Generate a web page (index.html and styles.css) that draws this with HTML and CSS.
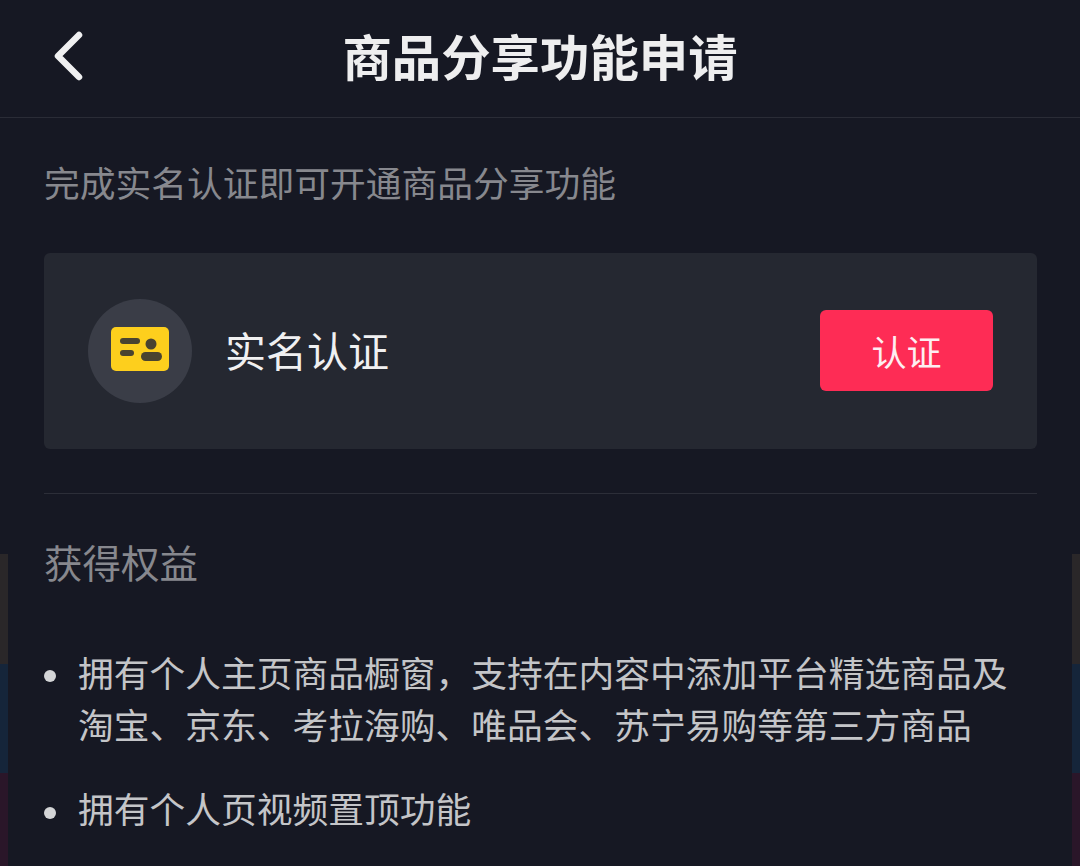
FILE: index.html
```html
<!DOCTYPE html>
<html lang="zh-CN">
<head>
<meta charset="utf-8">
<title>商品分享功能申请</title>
<link rel="stylesheet" href="styles.css">
</head>
<body>
<div class="strips strips-left"><i class="s1"></i><i class="s2"></i><i class="s3"></i></div>
<div class="strips strips-right"><i class="s1"></i><i class="s2"></i><i class="s3"></i></div>
<header class="topbar">
  <svg class="back" width="32" height="50" viewBox="0 0 32 50"><path d="M26 4 L5 25 L26 46" fill="none" stroke="#f0f0f1" stroke-width="6.500" stroke-linecap="round" stroke-linejoin="round"/></svg>
  <h1 class="title">商品分享功能申请</h1>
</header>
<main class="content">
  <p class="intro">完成实名认证即可开通商品分享功能</p>
  <section class="card">
    <div class="badge">
      <svg class="badge-icon" width="58" height="44" viewBox="0 0 58 44">
        <rect width="58" height="44" rx="5" fill="#fdcf1d"/>
        <rect x="9" y="11" width="20" height="6" rx="3" fill="#4a4430"/>
        <rect x="9" y="23" width="14" height="6" rx="3" fill="#4a4430"/>
        <circle cx="40" cy="17" r="5.500" fill="#4a4430"/>
        <rect x="30" y="25" width="21" height="9" rx="4.500" fill="#4a4430"/>
      </svg>
    </div>
    <span class="card-label">实名认证</span>
    <button class="verify">认证</button>
  </section>
  <hr class="rule">
  <h2 class="section-title">获得权益</h2>
  <ul class="benefits">
    <li>拥有个人主页商品橱窗，支持在内容中添加平台精选商品及淘宝、京东、考拉海购、唯品会、苏宁易购等第三方商品</li>
    <li>拥有个人页视频置顶功能</li>
  </ul>
</main>
</body>
</html>
```
FILE: styles.css
```css
* { box-sizing: border-box; }
html, body { margin: 0; padding: 0; }
body {
  position: relative;
  width: 1080px;
  height: 866px;
  overflow: hidden;
  background: #161823;
  font-family: "Liberation Sans", "Noto Sans CJK SC", sans-serif;
}
.strips {
  position: absolute;
  top: 554px;
  width: 8px;
  height: 312px;
  display: flex;
  flex-direction: column;
}
.strips-left { left: 0; }
.strips-right { right: 0; }
.strips i { display: block; }
.s1 { height: 110px; background: #2a2729; }
.s2 { height: 109px; background: #15253a; }
.s3 { height: 93px; background: #2a1629; }
.topbar {
  height: 118px;
  border-bottom: 1px solid #2a2c36;
  display: flex;
  align-items: center;
  justify-content: center;
  position: relative;
}
.back { position: absolute; left: 53px; top: 31px; }
.title {
  margin: 0;
  font-size: 49.400px;
  font-weight: 700;
  line-height: 1;
  color: #eeeeef;
}
.content { padding: 0 43px 0 44px; }
.intro {
  margin: 0;
  padding-top: 47px;
  font-size: 35.750px;
  line-height: 40px;
  color: #87888e;
}
.card {
  margin-top: 48px;
  height: 196px;
  background: #252831;
  border-radius: 6px;
  padding: 0 44px;
  display: flex;
  align-items: center;
}
.badge {
  width: 104px;
  height: 104px;
  border-radius: 50%;
  background: #3a3d47;
  display: flex;
  align-items: center;
  justify-content: center;
  flex: none;
}
.badge-icon { margin-bottom: 4px; }
.card-label {
  margin: 0 0 4px 33px;
  font-size: 41px;
  color: #f0f0f1;
  flex: 1;
}
.verify {
  width: 173px;
  height: 81px;
  margin-bottom: 2px;
  border: 0;
  border-radius: 6px;
  background: #fe2c55;
  color: #fdeef1;
  font: inherit;
  font-size: 35px;
  padding: 0;
}
.rule {
  margin: 44px 0 0;
  border: 0;
  height: 1px;
  background: #2c2e38;
}
.section-title {
  margin: 0;
  padding-top: 49px;
  font-size: 38.500px;
  font-weight: 400;
  line-height: 44px;
  color: #87888e;
}
.benefits {
  list-style: none;
  margin: 0;
  padding: 62px 24px 0 35px;
}
.benefits li {
  position: relative;
  left: -1px;
  font-size: 35.750px;
  line-height: 52px;
  color: #c4c5c8;
  margin-bottom: 32px;
}
.benefits li::before {
  content: "";
  position: absolute;
  left: -34px;
  top: 21px;
  width: 12px;
  height: 12px;
  border-radius: 50%;
  background: #d4d5d7;
}
.benefits li:last-child::before { top: 22px; }
```
